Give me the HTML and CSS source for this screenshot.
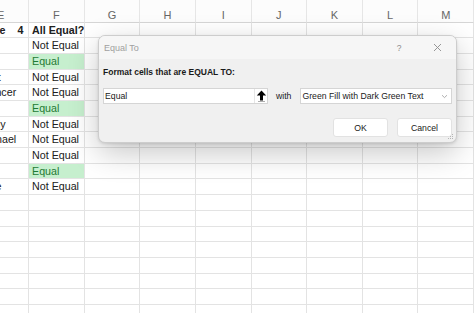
FILE: index.html
```html
<!DOCTYPE html>
<html>
<head>
<meta charset="utf-8">
<title>Equal To</title>
<link rel="stylesheet" href="styles.css">
</head>
<body>
<div class="app">
  <div class="sheet">
    <div class="row head">
      <div class="c">E</div><div class="c">F</div><div class="c">G</div><div class="c">H</div><div class="c">I</div><div class="c">J</div><div class="c">K</div><div class="c">L</div><div class="c">M</div>
    </div>
    <div class="row"><div class="c b wide">Name 4</div><div class="c b">All Equal?</div><div class="c"></div><div class="c"></div><div class="c"></div><div class="c"></div><div class="c"></div><div class="c"></div><div class="c"></div></div>
    <div class="row"><div class="c"></div><div class="c">Not Equal</div><div class="c"></div><div class="c"></div><div class="c"></div><div class="c"></div><div class="c"></div><div class="c"></div><div class="c"></div></div>
    <div class="row"><div class="c"></div><div class="c eq">Equal</div><div class="c"></div><div class="c"></div><div class="c"></div><div class="c"></div><div class="c"></div><div class="c"></div><div class="c"></div></div>
    <div class="row"><div class="c">Scott</div><div class="c">Not Equal</div><div class="c"></div><div class="c"></div><div class="c"></div><div class="c"></div><div class="c"></div><div class="c"></div><div class="c"></div></div>
    <div class="row"><div class="c">Spencer</div><div class="c">Not Equal</div><div class="c"></div><div class="c"></div><div class="c"></div><div class="c"></div><div class="c"></div><div class="c"></div><div class="c"></div></div>
    <div class="row"><div class="c"></div><div class="c eq">Equal</div><div class="c"></div><div class="c"></div><div class="c"></div><div class="c"></div><div class="c"></div><div class="c"></div><div class="c"></div></div>
    <div class="row"><div class="c">Shelly</div><div class="c">Not Equal</div><div class="c"></div><div class="c"></div><div class="c"></div><div class="c"></div><div class="c"></div><div class="c"></div><div class="c"></div></div>
    <div class="row"><div class="c">Raphael</div><div class="c">Not Equal</div><div class="c"></div><div class="c"></div><div class="c"></div><div class="c"></div><div class="c"></div><div class="c"></div><div class="c"></div></div>
    <div class="row"><div class="c">Jane</div><div class="c">Not Equal</div><div class="c"></div><div class="c"></div><div class="c"></div><div class="c"></div><div class="c"></div><div class="c"></div><div class="c"></div></div>
    <div class="row"><div class="c"></div><div class="c eq">Equal</div><div class="c"></div><div class="c"></div><div class="c"></div><div class="c"></div><div class="c"></div><div class="c"></div><div class="c"></div></div>
    <div class="row"><div class="c">Rose</div><div class="c">Not Equal</div><div class="c"></div><div class="c"></div><div class="c"></div><div class="c"></div><div class="c"></div><div class="c"></div><div class="c"></div></div>
    <div class="row"><div class="c"></div><div class="c"></div><div class="c"></div><div class="c"></div><div class="c"></div><div class="c"></div><div class="c"></div><div class="c"></div><div class="c"></div></div>
    <div class="row"><div class="c"></div><div class="c"></div><div class="c"></div><div class="c"></div><div class="c"></div><div class="c"></div><div class="c"></div><div class="c"></div><div class="c"></div></div>
    <div class="row"><div class="c"></div><div class="c"></div><div class="c"></div><div class="c"></div><div class="c"></div><div class="c"></div><div class="c"></div><div class="c"></div><div class="c"></div></div>
    <div class="row"><div class="c"></div><div class="c"></div><div class="c"></div><div class="c"></div><div class="c"></div><div class="c"></div><div class="c"></div><div class="c"></div><div class="c"></div></div>
    <div class="row"><div class="c"></div><div class="c"></div><div class="c"></div><div class="c"></div><div class="c"></div><div class="c"></div><div class="c"></div><div class="c"></div><div class="c"></div></div>
    <div class="row"><div class="c"></div><div class="c"></div><div class="c"></div><div class="c"></div><div class="c"></div><div class="c"></div><div class="c"></div><div class="c"></div><div class="c"></div></div>
    <div class="row"><div class="c"></div><div class="c"></div><div class="c"></div><div class="c"></div><div class="c"></div><div class="c"></div><div class="c"></div><div class="c"></div><div class="c"></div></div>
    <div class="row"><div class="c"></div><div class="c"></div><div class="c"></div><div class="c"></div><div class="c"></div><div class="c"></div><div class="c"></div><div class="c"></div><div class="c"></div></div>
  </div>

  <div class="dialog">
    <div class="titlebar">
      <div class="title">Equal To</div>
      <div class="tb-btn">?</div>
      <div class="tb-btn">
        <svg width="9" height="9" viewBox="0 0 9 9"><path d="M1 1 L8 8 M8 1 L1 8" stroke="#8c8c8c" stroke-width="0.9" fill="none"/></svg>
      </div>
    </div>
    <div class="body">
      <div class="label">Format cells that are EQUAL TO:</div>
      <div class="inrow">
        <div class="field ref">
          <span class="val">Equal</span>
          <span class="pick">
            <svg width="11" height="12" viewBox="0 0 11 12"><path d="M5.5 0.6 L10.2 5.4 L7 5.4 L7 10.6 L4 10.6 L4 5.4 L0.8 5.4 Z" fill="#000"/><path d="M2 11.5 H9" stroke="#9a9a9a" stroke-width="0.8"/></svg>
          </span>
        </div>
        <span class="with">with</span>
        <div class="field select">
          <span class="val">Green Fill with Dark Green Text</span>
          <svg class="chev" width="7" height="5" viewBox="0 0 7 5"><path d="M1 1.2 L3.5 3.6 L6 1.2" stroke="#9a9a9a" stroke-width="0.8" fill="none"/></svg>
        </div>
      </div>
      <div class="btnrow">
        <div class="btn">OK</div>
        <div class="btn">Cancel</div>
      </div>
    </div>
    <svg class="grip" width="7" height="7" viewBox="0 0 7 7"><g fill="#b5b5b5"><rect x="5" y="1" width="1" height="1"/><rect x="3" y="3" width="1" height="1"/><rect x="5" y="3" width="1" height="1"/><rect x="1" y="5" width="1" height="1"/><rect x="3" y="5" width="1" height="1"/><rect x="5" y="5" width="1" height="1"/></g></svg>
  </div>
</div>
</body>
</html>
```

FILE: styles.css
```css
html, body {
  margin: 0;
  padding: 0;
  background: #ffffff;
  overflow: hidden;
}

body {
  font-family: "Liberation Sans", Arial, sans-serif;
}

.app {
  position: relative;
  width: 474px;
  height: 313px;
  overflow: hidden;
}

.sheet {
  margin-left: -26.6px;
  width: 500.6px;
}

.row {
  display: grid;
  grid-template-columns: repeat(9, 55.625px);
  height: 15.7px;
}

.c {
  box-sizing: border-box;
  border-right: 1px solid #e3e3e3;
  border-bottom: 1px solid #e3e3e3;
  font-size: 10.7px;
  line-height: 14.7px;
  padding-left: 3px;
  white-space: nowrap;
  overflow: hidden;
  color: #202020;
}

.b {
  font-weight: bold;
}

.wide {
  word-spacing: 9px;
}

.eq {
  background: #c6efce;
  color: #1e7a34;
}

.row.head {
  height: 22.6px;
}

.head .c {
  background: #fcfcfc;
  border-bottom: 1px solid #d6d6d6;
  border-right: 1px solid #e6e6e6;
  color: #666666;
  font-size: 11px;
  text-align: center;
  padding: 9px 0 0 0;
  line-height: 12px;
}

/* dialog */
.dialog {
  position: absolute;
  left: 98px;
  top: 35px;
  width: 359px;
  height: 108px;
  box-sizing: border-box;
  border: 1px solid #cdcdcd;
  border-radius: 7px;
  background: #f0f0f0;
  box-shadow: 0 10px 30px rgba(0, 0, 0, 0.22), 0 1px 3px rgba(0, 0, 0, 0.12);
  display: flex;
  flex-direction: column;
  font-size: 8.7px;
  color: #1a1a1a;
}

.titlebar {
  height: 23px;
  display: flex;
  align-items: center;
  background: #f6f6f6;
  border-radius: 6px 6px 0 0;
}

.title {
  flex: 1;
  padding-left: 5px;
  font-size: 9px;
  color: #a0a0a0;
}

.tb-btn {
  width: 38px;
  height: 23px;
  display: flex;
  align-items: center;
  justify-content: center;
  color: #8c8c8c;
  font-size: 8.5px;
}

.body {
  padding: 0 4px;
  display: flex;
  flex-direction: column;
}

.label {
  margin-top: 8px;
  font-weight: bold;
  font-size: 8.5px;
  line-height: 11px;
}

.inrow {
  margin-top: 10px;
  display: flex;
  align-items: center;
  height: 16px;
}

.field {
  box-sizing: border-box;
  height: 16px;
  border: 1px solid #d5d5d5;
  background: #ffffff;
  display: flex;
  align-items: center;
}

.field .val {
  flex: 1;
  padding-left: 1px;
  white-space: nowrap;
}

.ref {
  width: 165px;
}

.pick {
  width: 13px;
  height: 14px;
  box-sizing: border-box;
  border-left: 1px solid #e6e6e6;
  display: flex;
  align-items: center;
  justify-content: center;
}

.with {
  margin: 0 9px 0 8px;
}

.select {
  flex: 1;
}

.chev {
  margin-right: 3px;
}

.btnrow {
  margin-top: 14px;
  display: flex;
  justify-content: flex-end;
  gap: 9px;
}

.btn {
  width: 55px;
  height: 19px;
  box-sizing: border-box;
  border: 1px solid #e2e2e2;
  border-radius: 3px;
  background: #ffffff;
  display: flex;
  align-items: center;
  justify-content: center;
}

.grip {
  position: absolute;
  right: 2px;
  bottom: 2px;
}
```
